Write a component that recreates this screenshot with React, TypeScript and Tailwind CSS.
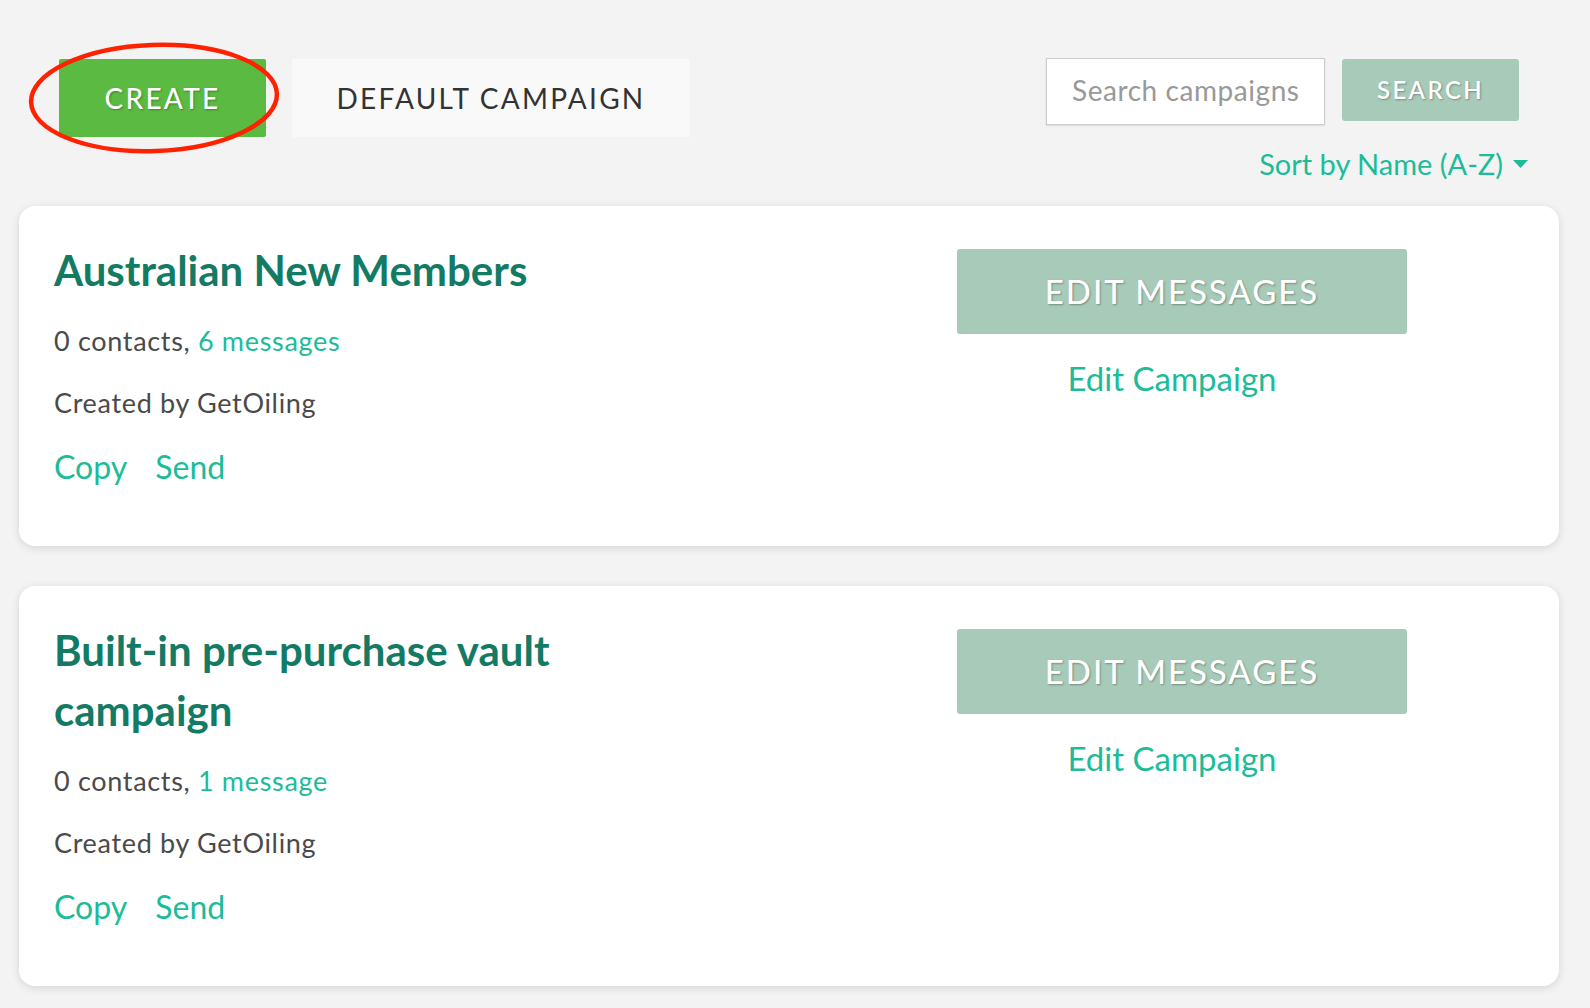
import React from "react";

type Campaign = {
  name: string;
  contacts: number;
  messages: string;
  author: string;
};

const campaigns: Campaign[] = [
  { name: "Australian New Members", contacts: 0, messages: "6 messages", author: "GetOiling" },
  { name: "Built-in pre-purchase vault campaign", contacts: 0, messages: "1 message", author: "GetOiling" },
];

const CampaignCard: React.FC<{ campaign: Campaign }> = ({ campaign }) => {
  return (
    <div className="flex rounded-[16px] bg-white pl-[35px] pt-[34px] pb-[57px] shadow-[0_2px_8px_rgba(0,0,0,0.12)]">
      {/* Campaign details */}
      <div className="w-[600px]">
        <h2 className="text-[42px] font-bold leading-[60px] text-[#137a63]">{campaign.name}</h2>
        <p className="mt-[21px] text-[27px] leading-[40px] tracking-[0.025em] text-[#4a4a4a]">
          {campaign.contacts} contacts, <a className="text-[#1dbc98]">{campaign.messages}</a>
        </p>
        <p className="mt-[22px] text-[27px] leading-[40px] tracking-[0.025em] text-[#4a4a4a]">
          Created by {campaign.author}
        </p>
        <div className="mt-[22px] flex gap-[28px] text-[32px] leading-[44px] text-[#1dbc98]">
          <a>Copy</a>
          <a>Send</a>
        </div>
      </div>

      {/* Actions */}
      <div className="ml-auto mr-[152px] mt-[9px] flex w-[450px] flex-col items-center">
        <button className="h-[85px] w-full rounded-[3px] bg-[#a8cab9] text-[33px] font-medium tracking-[0.06em] text-white [text-shadow:1px_1px_2px_rgba(0,0,0,0.3)]">
          EDIT MESSAGES
        </button>
        <a className="mt-[22px] pr-[20px] text-[33px] leading-[44px] text-[#1dbc98]">Edit Campaign</a>
      </div>
    </div>
  );
};

const App: React.FC = () => {
  return (
    <div className="min-h-screen bg-[#f3f3f3] pb-[40px] font-['Lato',sans-serif]">
      {/* Toolbar */}
      <div className="flex items-start justify-between pl-[59px] pr-[71px] pt-[58px]">
        <div className="mt-[1px] flex gap-[26px]">
          <div className="relative">
            <button className="h-[78px] w-[207px] rounded-[2px] bg-[#5bba41] text-[28px] font-medium tracking-[0.08em] text-white [text-shadow:1px_1px_2px_rgba(0,0,0,0.3)]">
              CREATE
            </button>
            <svg
              className="pointer-events-none absolute left-[-31px] top-[-17px]"
              width="252"
              height="112"
              viewBox="0 0 252 112"
            >
              <ellipse
                cx="126"
                cy="56"
                rx="123"
                ry="53"
                fill="none"
                stroke="#ff2200"
                strokeWidth="4.5"
                transform="rotate(-2 126 56)"
              />
            </svg>
          </div>
          <button className="h-[78px] w-[398px] rounded-[2px] bg-[#f9f9f9] text-[28px] tracking-[0.08em] text-[#333333]">
            DEFAULT CAMPAIGN
          </button>
        </div>

        <div className="flex flex-col items-end">
          <div className="flex items-start gap-[17px]">
            <input
              className="h-[67px] w-[279px] border border-[#cccccc] bg-white pb-[4px] pl-[25px] text-[28px] tracking-[0.02em] text-[#333] shadow-[0_1px_2px_rgba(0,0,0,0.1)] outline-none placeholder:text-[#999999]"
              placeholder="Search campaigns"
            />
            <button className="mt-[1px] h-[62px] w-[177px] rounded-[3px] bg-[#a8cab9] text-[24px] font-semibold tracking-[0.1em] text-white [text-shadow:1px_1px_2px_rgba(0,0,0,0.3)]">
              SEARCH
            </button>
          </div>
          <button className="mr-[-9px] mt-[21px] flex items-center gap-[10px] text-[29px] leading-[36px] text-[#1dbc98]">
            Sort by Name (A-Z)
            <svg width="15" height="8" viewBox="0 0 15 8">
              <path d="M0 0h15L7.5 8z" fill="#1dbc98" />
            </svg>
          </button>
        </div>
      </div>

      {/* Campaign list */}
      <div className="mt-[24px] flex flex-col gap-[40px] pl-[19px] pr-[31px]">
        {campaigns.map((c) => (
          <CampaignCard key={c.name} campaign={c} />
        ))}
      </div>
    </div>
  );
};

export default App;
